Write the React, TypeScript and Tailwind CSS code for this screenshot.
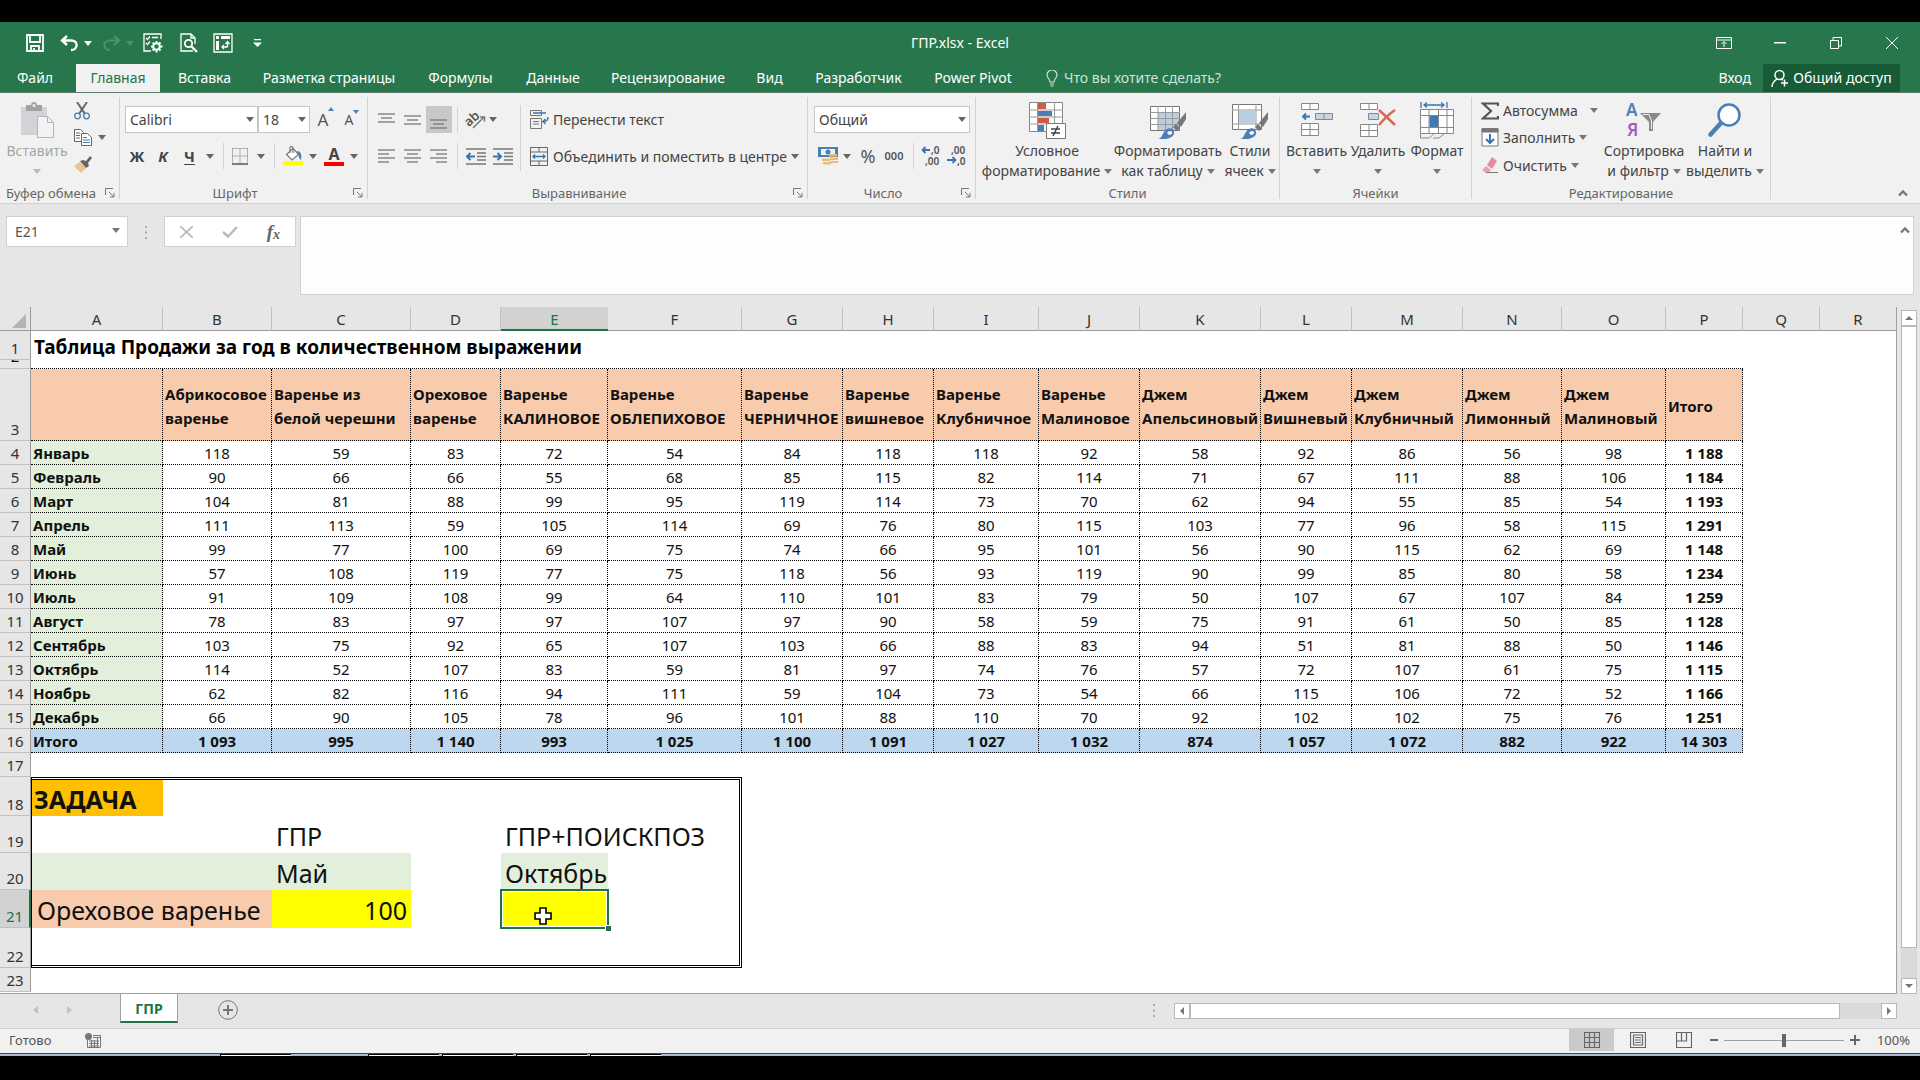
import type { ReactNode } from "react";

const uiFont = "font-['Noto_Sans','Open_Sans',sans-serif]";

const tabs = [
  { name: "Вставка", width: "w-[85px]" },
  { name: "Разметка страницы", width: "w-[164px]" },
  { name: "Формулы", width: "w-[99px]" },
  { name: "Данные", width: "w-[86px]" },
  { name: "Рецензирование", width: "w-[144px]" },
  { name: "Вид", width: "w-[59px]" },
  { name: "Разработчик", width: "w-[119px]" },
  { name: "Power Pivot", width: "w-[110px]" },
];

const columns = [
  { letter: "A", width: "w-[132px]" },
  { letter: "B", width: "w-[109px]" },
  { letter: "C", width: "w-[139px]" },
  { letter: "D", width: "w-[90px]" },
  { letter: "E", width: "w-[107px]" },
  { letter: "F", width: "w-[134px]" },
  { letter: "G", width: "w-[101px]" },
  { letter: "H", width: "w-[91px]" },
  { letter: "I", width: "w-[105px]" },
  { letter: "J", width: "w-[101px]" },
  { letter: "K", width: "w-[121px]" },
  { letter: "L", width: "w-[91px]" },
  { letter: "M", width: "w-[111px]" },
  { letter: "N", width: "w-[99px]" },
  { letter: "O", width: "w-[104px]" },
  { letter: "P", width: "w-[77px]" },
  { letter: "Q", width: "w-[77px]" },
  { letter: "R", width: "w-auto" },
];

const products = [
  ["Абрикосовое", "варенье"],
  ["Варенье из", "белой черешни"],
  ["Ореховое", "варенье"],
  ["Варенье", "КАЛИНОВОЕ"],
  ["Варенье", "ОБЛЕПИХОВОЕ"],
  ["Варенье", "ЧЕРНИЧНОЕ"],
  ["Варенье", "вишневое"],
  ["Варенье", "Клубничное"],
  ["Варенье", "Малиновое"],
  ["Джем", "Апельсиновый"],
  ["Джем", "Вишневый"],
  ["Джем", "Клубничный"],
  ["Джем", "Лимонный"],
  ["Джем", "Малиновый"],
  ["Итого"],
];

const sales: { month: string; values: number[] }[] = [
  { month: "Январь", values: [118, 59, 83, 72, 54, 84, 118, 118, 92, 58, 92, 86, 56, 98, 1188] },
  { month: "Февраль", values: [90, 66, 66, 55, 68, 85, 115, 82, 114, 71, 67, 111, 88, 106, 1184] },
  { month: "Март", values: [104, 81, 88, 99, 95, 119, 114, 73, 70, 62, 94, 55, 85, 54, 1193] },
  { month: "Апрель", values: [111, 113, 59, 105, 114, 69, 76, 80, 115, 103, 77, 96, 58, 115, 1291] },
  { month: "Май", values: [99, 77, 100, 69, 75, 74, 66, 95, 101, 56, 90, 115, 62, 69, 1148] },
  { month: "Июнь", values: [57, 108, 119, 77, 75, 118, 56, 93, 119, 90, 99, 85, 80, 58, 1234] },
  { month: "Июль", values: [91, 109, 108, 99, 64, 110, 101, 83, 79, 50, 107, 67, 107, 84, 1259] },
  { month: "Август", values: [78, 83, 97, 97, 107, 97, 90, 58, 59, 75, 91, 61, 50, 85, 1128] },
  { month: "Сентябрь", values: [103, 75, 92, 65, 107, 103, 66, 88, 83, 94, 51, 81, 88, 50, 1146] },
  { month: "Октябрь", values: [114, 52, 107, 83, 59, 81, 97, 74, 76, 57, 72, 107, 61, 75, 1115] },
  { month: "Ноябрь", values: [62, 82, 116, 94, 111, 59, 104, 73, 54, 66, 115, 106, 72, 52, 1166] },
  { month: "Декабрь", values: [66, 90, 105, 78, 96, 101, 88, 110, 70, 92, 102, 102, 75, 76, 1251] },
  { month: "Итого", values: [1093, 995, 1140, 993, 1025, 1100, 1091, 1027, 1032, 874, 1057, 1072, 882, 922, 14303] },
];

const formatNumber = (n: number) => String(n).replace(/(\d)(\d{3})$/, "$1\u00a0$2");

function Caret({ className = "text-[#666]" }: { className?: string }) {
  return (
    <svg width="8" height="5" viewBox="0 0 8 5" className={`shrink-0 ${className}`}>
      <path d="M0 0h8L4 5z" fill="currentColor" />
    </svg>
  );
}

function Tool({ label, className, children }: { label: string; className: string; children: ReactNode }) {
  return (
    <button type="button" aria-label={label} className={`flex shrink-0 items-center justify-center ${className}`}>
      {children}
    </button>
  );
}

function Separator({ className = "" }: { className?: string }) {
  return <div className={`w-px shrink-0 bg-[#d2d2d2] ${className}`} />;
}

function Group({ title, width, launcher, children }: { title: string; width: string; launcher?: boolean; children: ReactNode }) {
  return (
    <section className={`flex shrink-0 ${width}`}>
      <div className="flex min-w-0 flex-1 flex-col pt-1">
        <div className="flex flex-1">{children}</div>
        <div className="flex h-5 items-center">
          <span className="flex-1 text-center text-[13px] leading-5 whitespace-nowrap text-[#666]">{title}</span>
          {launcher && (
            <Tool label={`${title}: параметры`} className="mr-px w-4">
              <svg width="10" height="10" viewBox="0 0 10 10" fill="none" stroke="#777">
                <path d="M.5 7V.5H8M4 4l4.5 4.5M9 5v4H5" />
              </svg>
            </Tool>
          )}
        </div>
      </div>
      <Separator className="my-1" />
    </section>
  );
}

function BigButton({ icon, lines, width, disabled }: { icon: ReactNode; lines: string[]; width: string; disabled?: boolean }) {
  return (
    <button type="button" disabled={disabled} className={`flex shrink-0 flex-col items-center pt-1 text-[14px] leading-5 ${width} ${disabled ? "text-[#a6a6a6]" : "text-[#444]"}`}>
      <span className="mb-0.5 flex h-[38px] items-center">{icon}</span>
      <span className="whitespace-nowrap">{lines[0]}</span>
      <span className="flex h-5 items-center gap-1 whitespace-nowrap">
        {lines[1]}
        <Caret className={disabled ? "text-[#bbb]" : "text-[#777]"} />
      </span>
    </button>
  );
}

function Lines({ rows }: { rows: [number, number, number][] }) {
  return (
    <svg width="18" height="20" viewBox="0 0 18 20" stroke="#777" strokeWidth="1.3">
      {rows.map(([x1, x2, y]) => (
        <path key={y} d={`M${x1} ${y}H${x2}`} />
      ))}
    </svg>
  );
}

function Brush() {
  return (
    <g>
      <path d="M36 10l-9 11 4 4 5-8z" fill="#777" />
      <path d="M26 22l-3 3 4 4 3-3z" fill="#777" />
      <path d="M8 37c5-1 4-7 9-10 4-2 8 1 7 5-2 5-10 6-16 5z" fill="#4a7fb5" />
      <path d="M17 31c1-2 4-3 5-1 1 1-1 3-3 3z" fill="#f4f8fc" />
    </g>
  );
}

function TitleBar() {
  return (
    <div className="grid h-[42px] grid-cols-[1fr_auto_1fr] items-center text-white">
      <div className="flex h-9 items-center pl-[23px]">
        <Tool label="Сохранить" className="w-6">
          <svg width="18" height="18" viewBox="0 0 18 18" fill="none" stroke="#fff" strokeWidth="1.8">
            <path d="M1 1h16v16H1zM4 1v7h10V1M5 17v-5h8v5M8 14v3" />
          </svg>
        </Tool>
        <Tool label="Отменить" className="ml-2.5 w-6">
          <svg width="19" height="17" viewBox="0 0 19 17" fill="none" stroke="#fff" strokeWidth="2.4">
            <path d="M7 1L2 5.500l5 4.500M2 5.500h9c8 0 7 9.500 0 9.500" />
          </svg>
        </Tool>
        <Tool label="Список отмен" className="w-3.5">
          <Caret className="text-white" />
        </Tool>
        <Tool label="Вернуть" className="ml-1 w-6">
          <svg width="19" height="17" viewBox="0 0 19 17" fill="none" stroke="#4f9070" strokeWidth="2.2">
            <path d="M12 1l5 4.500-5 4.500M17 5.500H8c-8 0-7 9.500 0 9.500" />
          </svg>
        </Tool>
        <Tool label="Список возвратов" className="w-3.5">
          <Caret className="text-[#4f9070]" />
        </Tool>
        <Tool label="Параметры" className="ml-1 w-6">
          <svg width="20" height="20" viewBox="0 0 20 20" fill="none" stroke="#fff" strokeWidth="1.3">
            <path d="M8 18H1V1h17v5M3 5l1.500 1.500L7 3.500M9 4.500h6M3 10l1.500 1.500L7 8.500" />
            <circle cx="13.500" cy="13.500" r="3.300" strokeWidth="2" />
            <path d="M13.500 8v2M13.500 17v2.500M8 13.500h2M17 13.500h2.500M9.700 9.700l1.300 1.300M16 16l1.500 1.500M9.700 17.500l1.300-1.500M16 11l1.500-1.500" strokeWidth="2" />
          </svg>
        </Tool>
        <Tool label="Просмотр" className="ml-3 w-6">
          <svg width="18" height="20" viewBox="0 0 18 20" fill="none" stroke="#fff" strokeWidth="1.3">
            <path d="M15 11V5l-4-4H1v17h12M11 1v4h4" />
            <circle cx="8.500" cy="10.500" r="3.700" strokeWidth="1.800" />
            <path d="M11.500 13.500l5.500 5.500" strokeWidth="2.400" />
          </svg>
        </Tool>
        <Tool label="Сводная таблица" className="ml-2.5 w-6">
          <svg width="20" height="20" viewBox="0 0 20 20" fill="none" stroke="#fff" strokeWidth="1.3">
            <path d="M1 1h18v18H1z" />
            <path d="M3 3h3v3H3zM8 3h9v3H8zM3 8h3v9H3z" fill="#fff" stroke="none" />
            <path d="M14.500 14V9M12.500 11l2-2.500 2 2.500M14.500 14H9M11 12l-2 2 2 2" />
          </svg>
        </Tool>
        <Tool label="Настройка панели" className="ml-2.5 w-6">
          <svg width="9" height="9" viewBox="0 0 9 9" fill="#fff">
            <path d="M1 0h7v1.300H1zM0 3.500h9L4.500 8z" />
          </svg>
        </Tool>
      </div>
      <h1 className="text-[14px] leading-5">ГПР.xlsx - Excel</h1>
      <div className="flex h-9 items-center justify-end">
        <Tool label="Параметры ленты" className="w-14">
          <svg width="16" height="12" viewBox="0 0 16 12" fill="none" stroke="#fff">
            <path d="M.5 .5h15v11H.5zM.5 3h15M8 10V5M5.500 7L8 4.500 10.500 7" />
          </svg>
        </Tool>
        <Tool label="Свернуть" className="w-14">
          <svg width="12" height="2" viewBox="0 0 12 2" fill="#fff">
            <path d="M0 0h12v1.500H0z" />
          </svg>
        </Tool>
        <Tool label="Восстановить" className="w-14">
          <svg width="12" height="12" viewBox="0 0 12 12" fill="none" stroke="#fff">
            <path d="M.5 3.500h8v8h-8zM3 3V.5h8.500V9H9" />
          </svg>
        </Tool>
        <Tool label="Закрыть" className="w-14">
          <svg width="12" height="12" viewBox="0 0 12 12" stroke="#fff">
            <path d="M0 0l12 12M12 0L0 12" />
          </svg>
        </Tool>
      </div>
    </div>
  );
}

function TabBar() {
  return (
    <nav className="flex h-7 items-stretch text-[14px] leading-7 whitespace-nowrap text-white">
      <a href="#file" className="w-[70px] text-center">Файл</a>
      <a href="#home" aria-current="page" className="ml-1.5 w-[84px] bg-[#f1f1f1] text-center text-[#217346]">Главная</a>
      <div className="w-[2px]" />
      {tabs.map((tab) => (
        <a key={tab.name} href="#ribbon" className={`text-center ${tab.width}`}>
          {tab.name}
        </a>
      ))}
      <button type="button" className="ml-[18px] flex items-center gap-1.5 text-[#cfe3d8]">
        <svg width="12" height="17" viewBox="0 0 12 17" fill="none" stroke="#cfe3d8" strokeWidth="1.200">
          <path d="M4 12c0-3-3-4-3-7a5 5 0 0110 0c0 3-3 4-3 7zM4 14h4M4.500 16h3" />
        </svg>
        Что вы хотите сделать?
      </button>
      <a href="#login" className="mr-3 ml-auto">Вход</a>
      <button type="button" className="mr-5 flex w-[137px] items-center justify-center gap-1 bg-[#185c37]">
        <svg width="18" height="19" viewBox="0 0 18 19" fill="none" stroke="#fff" strokeWidth="1.500">
          <circle cx="8.500" cy="6" r="4.500" />
          <path d="M1 18c0-4 2-6 5-8M10 10l2 1M13.500 10.500v7M10 14h7" />
        </svg>
        Общий доступ
      </button>
    </nav>
  );
}

function ClipboardGroup() {
  return (
    <Group title="Буфер обмена" width="w-[120px]" launcher>
      <BigButton
        width="w-[74px]"
        lines={["Вставить", ""]}
        disabled
        icon={
          <svg width="34" height="36" viewBox="0 0 34 36">
            <path d="M1 5h26v28H1z" fill="#d4d2d6" />
            <path d="M6 3h5c0-4 6-4 6 0h5v6H6z" fill="#a3a1a5" />
            <circle cx="14" cy="3.500" r="1.500" fill="#f1f1f1" />
            <path d="M17.500 14.500h10l6 6v15h-16z" fill="#f4f1f5" stroke="#b5b3b7" />
            <path d="M27.500 14.500v6h6" fill="none" stroke="#b5b3b7" />
          </svg>
        }
      />
      <div className="flex flex-col">
        <Tool label="Вырезать" className="h-[27px] w-4">
          <svg width="16" height="18" viewBox="0 0 16 18" fill="none">
            <path d="M3 0l8 12M13 0L5 12" stroke="#666" strokeWidth="2" />
            <circle cx="3.500" cy="14" r="2.800" stroke="#4a7fb5" strokeWidth="1.300" />
            <circle cx="12.500" cy="14" r="2.800" stroke="#4a7fb5" strokeWidth="1.300" />
          </svg>
        </Tool>
        <div className="flex h-[27px] items-center gap-1.5">
          <Tool label="Копировать" className="w-[18px]">
            <svg width="18" height="17" viewBox="0 0 18 17" fill="#fff" stroke="#666">
              <path d="M.5 .5h6l3 3v9h-9zM2 4h4M2 6.500h4M2 9h4" />
              <path d="M7.500 4.500h6l4 4v8h-10z" />
              <path d="M9 8.500h4M9 11h7M9 13.500h7" stroke="#4a7fb5" />
            </svg>
          </Tool>
          <Caret />
        </div>
        <Tool label="Формат по образцу" className="h-[26px] w-[18px]">
          <svg width="18" height="17" viewBox="0 0 18 17">
            <path d="M0 10l6-4 6 6-5 5z" fill="#e8c48e" />
            <path d="M6 5l3-1 3 1 4-5 2 2-4 5 1 3-3 2z" fill="#666" />
          </svg>
        </Tool>
      </div>
    </Group>
  );
}

function FontGroup() {
  return (
    <Group title="Шрифт" width="w-[248px]" launcher>
      <div className="flex flex-col gap-2.5 pt-[9px]">
        <div className="flex h-[27px] items-center pl-[5px]">
          <SelectBox label="Шрифт" value="Calibri" className="w-[133px]" />
          <SelectBox label="Размер шрифта" value="18" className="w-[52px]" />
          <Tool label="Увеличить размер" className="ml-1 w-6 items-start text-[17px] text-[#555]">
            A
            <svg width="6" height="4" viewBox="0 0 6 4" className="mb-4">
              <path d="M0 4h6L3 0z" fill="#4a7fb5" />
            </svg>
          </Tool>
          <Tool label="Уменьшить размер" className="ml-0.5 w-6 text-[14px] text-[#555]">
            A
            <svg width="6" height="4" viewBox="0 0 6 4" className="mb-4">
              <path d="M0 0h6L3 4z" fill="#4a7fb5" />
            </svg>
          </Tool>
        </div>
        <div className="flex h-[26px] items-center pl-1 text-[15px] font-bold text-[#444]">
          <Tool label="Полужирный" className="w-[26px]">Ж</Tool>
          <Tool label="Курсив" className="w-[26px] italic">К</Tool>
          <Tool label="Подчеркнутый" className="w-[27px] underline underline-offset-2">Ч</Tool>
          <Tool label="Вид подчеркивания" className="w-3.5"><Caret /></Tool>
          <Separator className="mx-1.5 h-[26px]" />
          <Tool label="Границы" className="w-5">
            <svg width="16" height="17" viewBox="0 0 16 17" fill="none" stroke="#777">
              <path d="M.5 .5h15M.5 8h15M.5 .5V15M8 .5V15M15.500 .5V15" strokeDasharray="1 1" />
              <path d="M0 16h16" stroke="#555" strokeWidth="1.500" />
            </svg>
          </Tool>
          <Tool label="Вид границ" className="ml-1 w-3.5"><Caret /></Tool>
          <Separator className="mx-1.5 h-[26px]" />
          <Tool label="Цвет заливки" className="w-6">
            <svg width="20" height="20" viewBox="0 0 20 20">
              <path d="M10 2.500l5.500 6L9 14 3.500 8.500z" fill="#fff" stroke="#777" strokeWidth="1.200" />
              <path d="M7 7V2c0-2 3-2 3 0v5" fill="none" stroke="#777" strokeWidth="1.200" />
              <path d="M14 5c4 0 5 4 4 9-2-1-2-4-3-6z" fill="#4a7fb5" />
              <path d="M0 15h20v4.500H0z" fill="#ff0" />
            </svg>
          </Tool>
          <Tool label="Выбор заливки" className="w-4"><Caret /></Tool>
          <Tool label="Цвет текста" className="w-[26px] flex-col text-[16px] leading-[15px]">
            A
            <span className="h-1 w-5 bg-[#f00]" />
          </Tool>
          <Tool label="Выбор цвета текста" className="w-3.5"><Caret /></Tool>
        </div>
      </div>
    </Group>
  );
}

function SelectBox({ label, value, className }: { label: string; value: string; className: string }) {
  return (
    <div className={`relative h-[27px] ${className}`}>
      <select aria-label={label} className="h-full w-full appearance-none border border-[#c6c6c6] bg-white pl-1 text-[14px] leading-5 text-[#444]">
        <option>{value}</option>
      </select>
      <Caret className="pointer-events-none absolute top-[11px] right-1 text-[#666]" />
    </div>
  );
}

function AlignmentGroup() {
  return (
    <Group title="Выравнивание" width="w-[440px]" launcher>
      <div className="flex flex-col gap-2.5 pt-[9px] pl-[5px]">
        <div className="flex h-[27px] items-center">
          <Tool label="По верхнему краю" className="w-[27px]">
            <Lines rows={[[0, 17, 4], [3, 14, 8], [0, 17, 12]]} />
          </Tool>
          <Tool label="По середине" className="w-[26px]">
            <Lines rows={[[0, 17, 6], [3, 14, 10], [0, 17, 14]]} />
          </Tool>
          <Tool label="По нижнему краю" className="h-[27px] w-[26px] bg-[#c8c8c8]">
            <Lines rows={[[0, 17, 10], [3, 14, 14], [0, 17, 18]]} />
          </Tool>
          <Separator className="mx-[5px] h-[26px]" />
          <Tool label="Ориентация" className="w-[26px]">
            <svg width="22" height="20" viewBox="0 0 22 20" className="overflow-visible">
              <text x="-1" y="13" transform="rotate(-42 7 9)" fontSize="13" fontWeight="600" fill="#555">ab</text>
              <path d="M8 18L19 7M15 7h4.500v4.500" fill="none" stroke="#777" strokeWidth="1.500" />
            </svg>
          </Tool>
          <Caret />
        </div>
        <div className="flex h-[26px] items-center">
          <Tool label="По левому краю" className="w-[27px]">
            <Lines rows={[[0, 17, 4], [0, 11, 8], [0, 17, 12], [0, 11, 16]]} />
          </Tool>
          <Tool label="По центру" className="w-[26px]">
            <Lines rows={[[0, 17, 4], [3, 14, 8], [0, 17, 12], [3, 14, 16]]} />
          </Tool>
          <Tool label="По правому краю" className="w-[26px]">
            <Lines rows={[[0, 17, 4], [6, 17, 8], [0, 17, 12], [6, 17, 16]]} />
          </Tool>
          <Separator className="mx-[5px] h-[26px]" />
          <Tool label="Уменьшить отступ" className="w-[26px]">
            <svg width="20" height="17" viewBox="0 0 20 17" fill="none" stroke="#777" strokeWidth="1.300">
              <path d="M0 1h20M11 5h9M11 8.500h9M11 12h9M0 16h20" />
              <path d="M9 8.500H1M4.500 5L1 8.500 4.500 12" stroke="#3a74b0" strokeWidth="2" />
            </svg>
          </Tool>
          <Tool label="Увеличить отступ" className="w-[27px]">
            <svg width="20" height="17" viewBox="0 0 20 17" fill="none" stroke="#777" strokeWidth="1.300">
              <path d="M0 1h20M11 5h9M11 8.500h9M11 12h9M0 16h20" />
              <path d="M0 8.500h8M4.500 5L8 8.500 4.500 12" stroke="#3a74b0" strokeWidth="2" />
            </svg>
          </Tool>
        </div>
      </div>
      <Separator className="mt-2 mb-1 ml-1 h-[66px]" />
      <div className="flex flex-col gap-2.5 pt-[9px] pl-[9px] text-[14px] text-[#444]">
        <button type="button" className="flex h-[27px] items-center gap-1 whitespace-nowrap">
          <svg width="19" height="19" viewBox="0 0 19 19" fill="none" stroke="#777">
            <path d="M.5 .5h11v5H.5zM.5 8.500h11v10H.5zM3 11.500h6M3 14h6" />
            <path d="M3 3h13M18 7c0 4-2 4.500-5 4.500M15.500 9L13 11.500l2.500 2.500" stroke="#3a74b0" strokeWidth="1.500" />
          </svg>
          Перенести текст
        </button>
        <button type="button" className="flex h-[26px] items-center gap-1 whitespace-nowrap">
          <svg width="19" height="19" viewBox="0 0 19 19" fill="none" stroke="#666">
            <path d="M.5 .5h17v18H.5zM.5 5h17M.5 14h17M9 .5V5M9 14v4.500" />
            <path d="M3 9.500h12M5 7.500l-2 2 2 2M13 7.500l2 2-2 2" stroke="#3a74b0" strokeWidth="1.300" />
          </svg>
          Объединить и поместить в центре
          <Caret className="text-[#666]" />
        </button>
      </div>
    </Group>
  );
}

function NumberGroup() {
  return (
    <Group title="Число" width="w-[168px]" launcher>
      <div className="flex flex-col gap-2.5 pt-[9px] pl-1.5">
        <SelectBox label="Числовой формат" value="Общий" className="w-[156px]" />
        <div className="flex h-[26px] items-center pl-1 text-[#555]">
          <Tool label="Денежный формат" className="w-5">
            <svg width="20" height="20" viewBox="0 0 20 20">
              <path d="M0 1h20v10H0z" fill="#4a7fb5" />
              <path d="M3 3h14v6H3z" fill="#f1f1f1" />
              <circle cx="10" cy="6" r="2.500" fill="#4a7fb5" />
              <path d="M11 8h8v2.500h-8zM12 11.500h8V14h-8zM4 12.500h8V15H4zM5 16h8v2.500H5zM12 15h8v2h-8z" fill="#ebbd79" />
            </svg>
          </Tool>
          <Tool label="Выбор валюты" className="w-[18px]"><Caret /></Tool>
          <Tool label="Процентный формат" className="w-6 text-[18px]">%</Tool>
          <Tool label="Формат с разделителями" className="ml-0.5 w-6 text-[11px] font-semibold">000</Tool>
          <Separator className="mx-[7px] h-[26px]" />
          <Tool label="Увеличить разрядность" className="w-5">
            <svg width="20" height="22" viewBox="0 0 20 22" className="overflow-visible">
              <text x="10" y="9" fontSize="10" fontWeight="600" fill="#555">,0</text>
              <text x="4" y="20" fontSize="10" fontWeight="600" fill="#555">,00</text>
              <path d="M9 5H2M4.500 2L1.500 5l3 3" fill="none" stroke="#3a74b0" strokeWidth="1.800" />
            </svg>
          </Tool>
          <Tool label="Уменьшить разрядность" className="ml-1.5 w-5">
            <svg width="20" height="22" viewBox="0 0 20 22" className="overflow-visible">
              <text x="4" y="9" fontSize="10" fontWeight="600" fill="#555">,00</text>
              <text x="10" y="20" fontSize="10" fontWeight="600" fill="#555">,0</text>
              <path d="M0 15h8M5.500 12l3 3-3 3" fill="none" stroke="#3a74b0" strokeWidth="1.800" />
            </svg>
          </Tool>
        </div>
      </div>
    </Group>
  );
}

function StylesGroup() {
  return (
    <Group title="Стили" width="w-[304px]">
      <div className="flex pl-[5px]">
        <BigButton
          width="w-[132px]"
          lines={["Условное", "форматирование"]}
          icon={
            <svg width="37" height="37" viewBox="0 0 37 37">
              <path d="M.5 .5h33v29H.5z" fill="#fff" stroke="#888" />
              <path d="M8.500 0v30M25.500 0v30M0 8h34M0 15h34M0 22h34" stroke="#999" />
              <path d="M9 1h8v6H9zM9 16h11v5H9z" fill="#cf5b42" />
              <path d="M9 9h14v5H9zM9 23h6v6H9z" fill="#4a7fb5" />
              <path d="M17.500 21.500h19v15h-19z" fill="#fff" stroke="#777" />
              <path d="M22 27h9M22 31h9M29 24l-5 10" stroke="#444" strokeWidth="1.500" />
            </svg>
          }
        />
        <BigButton
          width="w-[110px]"
          lines={["Форматировать", "как таблицу"]}
          icon={
            <svg width="37" height="37" viewBox="0 0 37 37">
              <path d="M.5 4.500h29v24H.5z" fill="#fff" stroke="#777" />
              <path d="M8 11h21v17H8z" fill="#b9cde3" />
              <path d="M8 4v24M15.500 4v24M22.500 4v24M0 10.500h30M0 16.500h30M0 22.500h30" stroke="#999" />
              <Brush />
            </svg>
          }
        />
        <BigButton
          width="w-[54px]"
          lines={["Стили", "ячеек"]}
          icon={
            <svg width="37" height="37" viewBox="0 0 37 37">
              <path d="M.5 2.500h29v25H.5z" fill="#fff" stroke="#777" />
              <path d="M6.500 2v26M24 2v26M0 8h30M0 22h30" stroke="#999" />
              <path d="M7 8.500h16.500V21H7z" fill="#b9cde3" />
              <Brush />
            </svg>
          }
        />
      </div>
    </Group>
  );
}

function CellsGroup() {
  return (
    <Group title="Ячейки" width="w-[192px]">
      <div className="flex pl-[5px]">
        <BigButton
          width="w-[63px]"
          lines={["Вставить", ""]}
          icon={
            <svg width="32" height="34" viewBox="0 0 32 34" fill="#fff" stroke="#888">
              <path d="M.5 .5h17v6H.5zM9 .5v6M.5 20.500h17v12H.5zM9 20.500v12M.5 26.500h17" />
              <path d="M14.500 10.500h17v6h-17zM23 10.500v6" fill="#c7d5e6" />
              <path d="M9 13.500H2M5 10.500L2 13.500l3 3" fill="none" stroke="#3a74b0" strokeWidth="1.800" />
            </svg>
          }
        />
        <BigButton
          width="w-[60px]"
          lines={["Удалить", ""]}
          icon={
            <svg width="36" height="34" viewBox="0 0 36 34" fill="#fff" stroke="#888">
              <path d="M.5 .5h17v6H.5zM9 .5v6M.5 21.500h17v12H.5zM9 21.500v12M.5 27.500h17" />
              <path d="M8.500 10.500h10v6h-10z" fill="#c7d5e6" />
              <path d="M19 7c5 5 10 9 16 15M35 7c-6 4-11 9-16 15" fill="none" stroke="#d8694f" strokeWidth="2.500" />
            </svg>
          }
        />
        <BigButton
          width="w-[58px]"
          lines={["Формат", ""]}
          icon={
            <svg width="34" height="37" viewBox="0 0 34 37" fill="#fff" stroke="#888">
              <path d="M.5 7.500h33v24H.5zM9 7.500v24M18.500 7.500v24M27 7.500v24M.5 13.500h33M.5 25.500h33" />
              <path d="M.5 32v4h9l4-4M13 36h6l5-4" fill="none" />
              <path d="M9.500 14h8.500v11H9.500z" fill="#3f78b4" stroke="none" />
              <path d="M1 0v6M27 0v6M4 3h20M7 .5L4 3l3 2.500M21 .5L24 3l-3 2.500" fill="none" stroke="#3a74b0" strokeWidth="1.300" />
            </svg>
          }
        />
      </div>
    </Group>
  );
}

function EditingGroup() {
  return (
    <Group title="Редактирование" width="w-[299px]">
      <div className="flex w-[129px] flex-col pl-[9px] text-[14px] text-[#444]">
        <button type="button" className="flex h-[27px] items-center gap-1">
          <svg width="18" height="18" viewBox="0 0 18 18" fill="none" stroke="#555" strokeWidth="2.200">
            <path d="M17 4V1.500H2L10 9 2 16.500h15V14" />
          </svg>
          Автосумма
          <Caret className="ml-2 text-[#777]" />
        </button>
        <button type="button" className="flex h-[27px] items-center gap-1">
          <svg width="18" height="19" viewBox="0 0 18 19" fill="#fff" stroke="#777">
            <path d="M1 1h16v17H1z" />
            <path d="M1 .5h16V4H1z" fill="#777" />
            <path d="M9 6v9M5 11l4 4 4-4" fill="none" stroke="#3a74b0" strokeWidth="2" />
          </svg>
          Заполнить
          <Caret className="text-[#777]" />
        </button>
        <button type="button" className="flex h-[28px] items-center gap-1">
          <svg width="18" height="17" viewBox="0 0 18 17">
            <path d="M11 0l5 4-5 8-5-4z" fill="#e58ba0" />
            <path d="M5 9l5 4-2 2.500H4L1 13z" fill="#eba3b3" />
            <path d="M5 15.500h12" stroke="#777" />
          </svg>
          Очистить
          <Caret className="text-[#777]" />
        </button>
      </div>
      <BigButton
        width="w-[86px]"
        lines={["Сортировка", "и фильтр"]}
        icon={
          <svg width="36" height="36" viewBox="0 0 36 36" className="overflow-visible">
            <text x="0" y="14" fontSize="17" fontWeight="600" fill="#4a7fc0">А</text>
            <text x="1" y="34" fontSize="17" fontWeight="600" fill="#9a5fc0">Я</text>
            <path d="M14 11h21l-8 9v9h-4v-9z" fill="#8a8a8a" />
            <path d="M17 12.500h6l2.500 6.500v8" fill="none" stroke="#f1f1f1" />
          </svg>
        }
      />
      <BigButton
        width="w-[76px]"
        lines={["Найти и", "выделить"]}
        icon={
          <svg width="34" height="34" viewBox="0 0 34 34" fill="none" stroke="#4a80b8">
            <circle cx="21" cy="12" r="10.500" fill="#fff" strokeWidth="2.500" />
            <path d="M12.500 20.500L2.500 31.500" strokeWidth="4.500" strokeLinecap="round" />
          </svg>
        }
      />
    </Group>
  );
}

function FormulaBar() {
  return (
    <div className="flex h-[103px] items-start pt-3 pr-1.5 pl-1.5">
      <div className="relative h-[31px] w-[122px]">
        <input aria-label="Имя ячейки" defaultValue="E21" className="h-full w-full border border-[#d0d0d0] bg-white pl-2 text-[14px] text-[#555]" />
        <Caret className="pointer-events-none absolute top-3 right-2 text-[#777]" />
      </div>
      <Dots className="mx-4 mt-2.5" />
      <div className="flex h-[31px] w-[132px] items-center justify-around border border-[#d0d0d0] bg-white">
        <Tool label="Отмена" className="w-8">
          <svg width="13" height="12" viewBox="0 0 13 12" stroke="#bbb" strokeWidth="1.800">
            <path d="M0 0l13 12M13 0L0 12" />
          </svg>
        </Tool>
        <Tool label="Ввод" className="w-8">
          <svg width="16" height="12" viewBox="0 0 16 12" fill="none" stroke="#bbb" strokeWidth="2.500">
            <path d="M1 6l5 4.500L15 1" />
          </svg>
        </Tool>
        <Tool label="Вставить функцию" className="w-8 font-['Liberation_Serif',serif] text-[19px] leading-5 font-bold text-[#666] italic">
          f<span className="mt-1.5 text-[14px]">x</span>
        </Tool>
      </div>
      <div className="relative ml-1 h-[79px] flex-1">
        <textarea aria-label="Строка формул" className="block h-full w-full resize-none border border-[#d0d0d0] bg-[#fdfdfd]" />
        <Tool label="Свернуть строку формул" className="absolute top-2.5 right-1">
          <Chevron />
        </Tool>
      </div>
    </div>
  );
}

function Chevron() {
  return (
    <svg width="10" height="8" viewBox="0 0 10 8" fill="none" stroke="#777" strokeWidth="2.400">
      <path d="M1 6.500l4-4 4 4" />
    </svg>
  );
}

function Dots({ className }: { className: string }) {
  return (
    <svg width="4" height="14" viewBox="0 0 4 14" fill="#aaa" className={className}>
      <path d="M1 0h2v2H1zM1 5.500h2v2H1zM1 11h2v2H1z" />
    </svg>
  );
}

function RowHead({ n, active }: { n: number; active?: boolean }) {
  return (
    <th
      scope="row"
      className={
        active
          ? "border-r-2 border-b border-r-[#217346] border-b-[#c0c0c0] bg-[#d2d2d2] p-0 pt-0.5 text-center align-bottom text-[15px] leading-[21px] font-normal text-[#217346]"
          : "border-r border-b border-r-[#9b9b9b] border-b-[#c0c0c0] bg-[#e6e6e6] p-0 pt-0.5 text-center align-bottom text-[15px] leading-[21px] font-normal text-[#333]"
      }
    >
      {n}
    </th>
  );
}

function Sheet() {
  return (
    <div className="min-w-0 flex-1 overflow-hidden border-r border-b border-[#a0a0a0] bg-white">
      <table className="w-full table-fixed border-separate border-spacing-0 text-[15px] leading-6 text-[#111]">
        <colgroup>
          <col className="w-[31px]" />
          {columns.map((c) => (
            <col key={c.letter} className={c.width} />
          ))}
        </colgroup>
        <thead>
          <tr className="h-6 bg-[#e6e6e6]">
            <th className="border-r border-b border-[#9b9b9b] p-0">
              <svg width="14" height="14" viewBox="0 0 14 14" className="mt-1 ml-3">
                <path d="M14 0v14H0z" fill="#b4b4b4" />
              </svg>
            </th>
            {columns.map((c) => (
              <th
                key={c.letter}
                scope="col"
                className={
                  c.letter === "E"
                    ? "border-b-2 border-[#217346] bg-[#d2d2d2] p-0 pt-0.5 leading-5 font-normal text-[#217346]"
                    : "border-r border-b border-r-[#c0c0c0] border-b-[#9b9b9b] p-0 pt-0.5 leading-[21px] font-normal text-[#333] last:border-r-0"
                }
              >
                {c.letter}
              </th>
            ))}
          </tr>
        </thead>
        <tbody>
          <tr className="h-[29px]">
            <RowHead n={1} />
            <td colSpan={18} className="p-0 pl-[3px] align-bottom text-[19px] leading-[26px] font-bold whitespace-nowrap text-black">
              Таблица Продажи за год в количественном выражении
            </td>
          </tr>
          <tr className="h-[9px]">
            <th scope="row" className="border-r border-b border-r-[#9b9b9b] border-b-[#c0c0c0] bg-[#e6e6e6] p-0 font-normal">
              <div className="flex h-2 items-end justify-center overflow-hidden leading-6">2</div>
            </th>
            <td colSpan={16} className="border-b border-dotted border-black p-0" />
            <td colSpan={2} className="p-0" />
          </tr>
          <tr className="h-[72px]">
            <RowHead n={3} />
            <td className="border-r border-b border-dotted border-black bg-[#f8cbad]" />
            {products.map((lines, i) => (
              <td key={i} className="border-r border-b border-dotted border-black bg-[#f8cbad] p-0 pt-0.5 pl-0.5 font-bold whitespace-nowrap">
                {lines.map((line) => (
                  <div key={line}>{line}</div>
                ))}
              </td>
            ))}
          </tr>
          {sales.map((row, i) => {
            const total = row.month === "Итого";
            return (
              <tr key={i} className={total ? "h-6 font-bold" : "h-6"}>
                <RowHead n={i + 4} />
                <td className={`border-r border-b border-dotted border-black p-0 pt-0.5 pl-0.5 leading-[21px] font-bold ${total ? "bg-[#bdd7ee]" : "bg-[#e2efda]"}`}>{row.month}</td>
                {row.values.map((v, j) => (
                  <td key={j} className={`border-r border-b border-dotted border-black p-0 pt-0.5 text-center leading-[21px] ${total ? "bg-[#bdd7ee]" : ""} ${j === 14 ? "font-bold" : ""}`}>
                    {formatNumber(v)}
                  </td>
                ))}
              </tr>
            );
          })}
          <tr className="h-6">
            <RowHead n={17} />
          </tr>
          <tr className="h-[39px]">
            <RowHead n={18} />
            <td className="border-t-[3px] border-l border-double border-black bg-[#ffc000] bg-clip-padding p-0 pt-0.5 pl-0.5 text-[25px] leading-[34px] font-bold">ЗАДАЧА</td>
            <td colSpan={4} className="border-t-[3px] border-double border-black" />
            <td className="border-t-[3px] border-r-[3px] border-double border-black" />
          </tr>
          <tr className="h-[37px] text-[25px] leading-[34px]">
            <RowHead n={19} />
            <td className="border-l border-black" />
            <td />
            <td className="p-0 pt-0.5 pl-1">ГПР</td>
            <td />
            <td colSpan={2} className="border-r-[3px] border-double border-black p-0 pt-0.5 pl-1">ГПР+ПОИСКПОЗ</td>
          </tr>
          <tr className="h-[37px] text-[25px] leading-[34px]">
            <RowHead n={20} />
            <td className="border-l border-black bg-[#e2efda]" />
            <td className="bg-[#e2efda]" />
            <td className="bg-[#e2efda] p-0 pt-0.5 pl-1">Май</td>
            <td />
            <td className="bg-[#e2efda] p-0 pt-0.5 pl-1">Октябрь</td>
            <td className="border-r-[3px] border-double border-black" />
          </tr>
          <tr className="h-[38px] text-[25px] leading-[34px]">
            <RowHead n={21} active />
            <td colSpan={2} className="border-l border-black bg-[#f8cbad] p-0 pt-0.5 pl-[5px] whitespace-nowrap">Ореховое варенье</td>
            <td className="bg-[#ff0] p-0 pt-0.5 pr-1 text-right">100</td>
            <td />
            <td className="relative bg-[#ff0] p-0">
              <div className="absolute -inset-px border-2 border-[#217346] shadow-[inset_0_0_0_1px_#fff]">
                <div className="absolute -right-1 -bottom-1 h-1.5 w-1.5 border-t border-l border-white bg-[#217346]" />
                <svg width="18" height="18" viewBox="0 0 18 18" className="absolute top-4 left-8">
                  <path d="M6 1h6v5h5v6h-5v5H6v-5H1V6h5z" fill="#fff" stroke="#000" strokeWidth="1.600" />
                </svg>
              </div>
            </td>
            <td className="border-r-[3px] border-double border-black" />
          </tr>
          <tr className="h-10">
            <RowHead n={22} />
            <td className="border-b-[3px] border-l border-double border-black" />
            <td colSpan={4} className="border-b-[3px] border-double border-black" />
            <td className="border-r-[3px] border-b-[3px] border-double border-black" />
          </tr>
          <tr className="h-6">
            <RowHead n={23} />
          </tr>
        </tbody>
      </table>
    </div>
  );
}

function ScrollButton({ label, d, className }: { label: string; d: string; className: string }) {
  return (
    <Tool label={label} className={`border border-[#b8b8b8] bg-white ${className}`}>
      <svg width="8" height="8" viewBox="0 0 8 8">
        <path d={d} fill="#777" />
      </svg>
    </Tool>
  );
}

function SheetTabs() {
  return (
    <div className="flex h-[34px] items-start">
      <Tool label="Предыдущий лист" className="ml-[23px] h-8 w-6">
        <svg width="5" height="8" viewBox="0 0 5 8"><path d="M5 0v8L0 4z" fill="#c3c3c3" /></svg>
      </Tool>
      <Tool label="Следующий лист" className="ml-2.5 h-8 w-6">
        <svg width="5" height="8" viewBox="0 0 5 8"><path d="M0 0v8l5-4z" fill="#c3c3c3" /></svg>
      </Tool>
      <button type="button" className="ml-[39px] h-[29px] w-[58px] border-x border-b-2 border-x-[#a0a0a0] border-b-[#217346] bg-white pt-0.5 text-[14px] font-bold text-[#217346]">ГПР</button>
      <Tool label="Новый лист" className="ml-[38px] h-8 w-6">
        <svg width="20" height="20" viewBox="0 0 20 20" fill="none" stroke="#777">
          <circle cx="10" cy="10" r="9.300" />
          <path d="M5 10h10M10 5v10" strokeWidth="2" />
        </svg>
      </Tool>
      <div className="mt-[9px] mr-[23px] ml-auto flex w-[745px] items-start">
        <Dots className="mt-px mr-[18px]" />
        <ScrollButton label="Влево" d="M6 0v8L2 4z" className="h-4 w-4" />
        <div className="h-4 flex-1 bg-[#dadada]">
          <div className="h-4 w-[94%] border border-[#b8b8b8] bg-white" />
        </div>
        <ScrollButton label="Вправо" d="M2 0v8l4-4z" className="h-4 w-4" />
      </div>
    </div>
  );
}

function StatusBar() {
  return (
    <footer className="flex h-[25px] items-center border-t border-[#cdcdcd] bg-[#f1f1f1] pb-0.5 text-[13px] leading-5 text-[#555]">
      <span className="ml-[9px]">Готово</span>
      <Tool label="Запись макроса" className="ml-[34px] w-4">
        <svg width="16" height="15" viewBox="0 0 16 15" fill="none" stroke="#777">
          <path d="M2.500 6v8.500h13V2.500H8M8 4.500h7M4 8h10M4 10.500h10M4 13h10M6.500 7v7M9.500 7v7M12.500 5v9" />
          <circle cx="3.500" cy="3.500" r="3.500" fill="#777" stroke="none" />
        </svg>
      </Tool>
      <div className="ml-auto flex h-full items-center">
        <Tool label="Обычный" className="h-full w-[45px] bg-[#cacaca]">
          <svg width="16" height="16" viewBox="0 0 16 16" fill="none" stroke="#666" strokeWidth="1.200">
            <path d="M.5 .5h15v15H.5zM5.500 0v16M10.500 0v16M0 5.500h16M0 10.500h16" />
          </svg>
        </Tool>
        <Tool label="Разметка страницы" className="h-full w-[47px]">
          <svg width="16" height="16" viewBox="0 0 16 16" fill="none" stroke="#666" strokeWidth="1.200">
            <path d="M.5 .5h15v15H.5zM3.500 3h9v10h-9zM5 5.500h6M5 8h6M5 10.500h6" />
          </svg>
        </Tool>
        <Tool label="Страничный" className="h-full w-[45px]">
          <svg width="16" height="16" viewBox="0 0 16 16" fill="none" stroke="#666" strokeWidth="1.200">
            <path d="M.5 .5h15v15H.5zM5.500 0v9H0M5.500 9h5V0" />
          </svg>
        </Tool>
        <Tool label="Уменьшить масштаб" className="w-4">
          <span className="h-0.5 w-2 bg-[#666]" />
        </Tool>
        <input
          type="range"
          aria-label="Масштаб"
          defaultValue={50}
          className="mx-0.5 h-4 w-[120px] appearance-none bg-transparent [&::-webkit-slider-runnable-track]:h-px [&::-webkit-slider-runnable-track]:bg-[#a0a0a0] [&::-webkit-slider-thumb]:-mt-1.5 [&::-webkit-slider-thumb]:h-[13px] [&::-webkit-slider-thumb]:w-1 [&::-webkit-slider-thumb]:appearance-none [&::-webkit-slider-thumb]:bg-[#666]"
        />
        <Tool label="Увеличить масштаб" className="w-[18px]">
          <svg width="10" height="10" viewBox="0 0 10 10" stroke="#666" strokeWidth="2"><path d="M0 5h10M5 0v10" /></svg>
        </Tool>
        <span className="w-[56px] pr-2.5 text-right">100%</span>
      </div>
    </footer>
  );
}

export default function App() {
  return (
    <div className={`flex min-h-screen flex-col overflow-hidden bg-black pt-[22px] pb-6 ${uiFont}`}>
      <header className="bg-[#28774c]">
        <TitleBar />
        <TabBar />
      </header>

      {/* Ribbon */}
      <div className="flex h-[112px] border-t border-b border-t-[#5b7a69] border-b-[#d2d2d2] bg-[#f1f1f1]">
        <ClipboardGroup />
        <FontGroup />
        <AlignmentGroup />
        <NumberGroup />
        <StylesGroup />
        <CellsGroup />
        <EditingGroup />
        <div className="flex flex-1 items-end justify-end pr-3 pb-1.5">
          <Tool label="Свернуть ленту" className="">
            <Chevron />
          </Tool>
        </div>
      </div>

      <main className="flex flex-1 flex-col bg-[#e6e6e6]">
        <FormulaBar />
        <div className="flex flex-1">
          <Sheet />
          {/* Vertical scroll bar */}
          <div className="flex w-[23px] flex-col pt-[3px] pr-[3px] pl-1">
            <ScrollButton label="Вверх" d="M0 6h8L4 2z" className="h-4" />
            <div className="flex flex-1 flex-col bg-[#dadada]">
              <div className="flex-1 border border-[#b8b8b8] bg-white" />
              <div className="h-[30px]" />
            </div>
            <ScrollButton label="Вниз" d="M0 2h8L4 6z" className="h-4" />
          </div>
        </div>
        <SheetTabs />
      </main>
      <StatusBar />

      {/* Edge of the taskbar under the window */}
      <div className="flex h-[3px] gap-[3px] border-t border-[#3c4a5c] bg-[#a9bdd4] pl-[220px]">
        <div className="mr-[74px] w-[71px] border-t border-l border-black bg-white" />
        <div className="w-[71px] border-t border-l border-black bg-white" />
        <div className="w-[71px] border-t border-l border-black bg-white" />
        <div className="w-[71px] border-t border-l border-black bg-white" />
        <div className="w-[71px] border-t border-l border-black bg-white" />
      </div>
    </div>
  );
}
